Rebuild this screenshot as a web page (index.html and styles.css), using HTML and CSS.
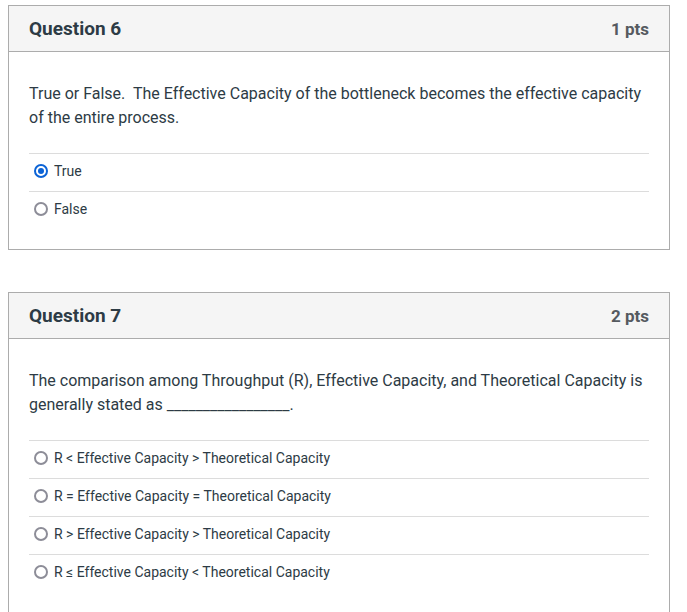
FILE: index.html
```html
<!DOCTYPE html>
<html>
<head>
<meta charset="utf-8">
<link rel="stylesheet" href="styles.css">
</head>
<body>
<div class="page">
  <div class="card">
    <div class="card-header">
      <h2 class="q-title">Question 6</h2>
      <span class="q-pts">1 pts</span>
    </div>
    <div class="card-body">
      <p class="q-text">True or False.&nbsp; The Effective Capacity of the bottleneck becomes the effective capacity of the entire process.</p>
      <div class="answers">
        <div class="answer"><span class="radio checked"></span><span class="label">True</span></div>
        <div class="answer"><span class="radio"></span><span class="label">False</span></div>
      </div>
    </div>
  </div>

  <div class="card">
    <div class="card-header">
      <h2 class="q-title">Question 7</h2>
      <span class="q-pts">2 pts</span>
    </div>
    <div class="card-body">
      <p class="q-text">The comparison among Throughput (R), Effective Capacity, and Theoretical Capacity is generally stated as _________________.</p>
      <div class="answers">
        <div class="answer"><span class="radio"></span><span class="label">R &lt; Effective Capacity &gt; Theoretical Capacity</span></div>
        <div class="answer"><span class="radio"></span><span class="label">R = Effective Capacity = Theoretical Capacity</span></div>
        <div class="answer"><span class="radio"></span><span class="label">R &gt; Effective Capacity &gt; Theoretical Capacity</span></div>
        <div class="answer"><span class="radio"></span><span class="label">R ≤ Effective Capacity &lt; Theoretical Capacity</span></div>
      </div>
    </div>
  </div>
</div>
</body>
</html>
```
FILE: styles.css
```css
* { box-sizing: border-box; }
html, body { margin: 0; padding: 0; background: #fff; }
body {
  font-family: Roboto, "Liberation Sans", Arial, sans-serif;
  color: #2d3b45;
}
.page {
  padding: 5px 17px 0 8px;
  display: flex;
  flex-direction: column;
  gap: 42px;
}
.card {
  border: 1px solid #acacac;
  background: #fff;
}
.card-header {
  height: 46px;
  background: #f5f5f5;
  border-bottom: 1px solid #acacac;
  display: flex;
  align-items: center;
  justify-content: space-between;
  padding: 0 20px;
}
.q-title {
  margin: 0;
  font-size: 19px;
  font-weight: 700;
  color: #2d3b45;
}
.q-pts {
  font-size: 17px;
  font-weight: 700;
  color: #555a60;
}
.card-body {
  padding: 30px 20px 20px;
}
.q-text {
  margin: 0;
  font-size: 16px;
  line-height: 24px;
}
.answers {
  margin-top: 23px;
}
.answer {
  border-top: 1px solid #dcdcdc;
  height: 38px;
  display: flex;
  align-items: center;
  padding-left: 5px;
  padding-bottom: 4px;
  font-size: 14px;
}
.radio {
  width: 14px;
  height: 14px;
  border-radius: 50%;
  border: 2px solid #8d8d98;
  margin-right: 6px;
  flex: none;
  position: relative;
}
.radio.checked {
  border-color: #0b63d6;
}
.radio.checked::after {
  content: "";
  position: absolute;
  left: 2px;
  top: 2px;
  width: 6px;
  height: 6px;
  border-radius: 50%;
  background: #0b63d6;
}
.label { color: #2d3b45; }
```
